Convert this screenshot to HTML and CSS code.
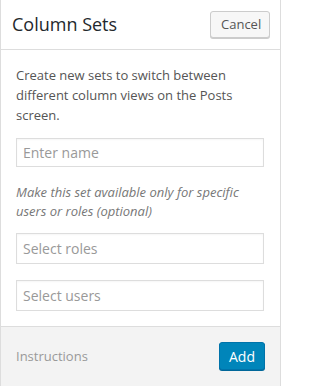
FILE: index.html
```html
<!DOCTYPE html>
<html>
<head>
<meta charset="utf-8">
<link rel="stylesheet" href="styles.css">
</head>
<body>
<div class="panel">
  <div class="header">
    <h2 class="title">Column Sets</h2>
    <button class="btn btn-secondary">Cancel</button>
  </div>
  <div class="content">
    <p class="intro">Create new sets to switch between different column views on the Posts screen.</p>
    <input class="field field-text" type="text" placeholder="Enter name">
    <p class="hint">Make this set available only for specific users or roles (optional)</p>
    <div class="field field-select">Select roles</div>
    <div class="field field-select">Select users</div>
  </div>
  <div class="footer">
    <span class="footer-link">Instructions</span>
    <button class="btn btn-primary">Add</button>
  </div>
</div>
</body>
</html>
```

FILE: styles.css
```css
html, body {
  margin: 0;
  padding: 0;
  background: #fff;
}
body {
  font-family: "Open Sans", "Liberation Sans", sans-serif;
  width: 282px;
  height: 386px;
  overflow: hidden;
}
.panel {
  width: 281px;
  height: 386px;
  box-sizing: border-box;
  border-left: 1px solid #dddddd;
  border-right: 1px solid #dddddd;
  display: flex;
  flex-direction: column;
  background: #fff;
}
.header {
  height: 50px;
  box-sizing: border-box;
  border-bottom: 1px solid #dddddd;
  display: flex;
  align-items: center;
  justify-content: space-between;
  padding: 0 10px 1px 11px;
}
.title {
  margin: 0;
  font-size: 18px;
  font-weight: 400;
  color: #23282d;
  line-height: 24px;
}
.btn {
  font-family: inherit;
  font-size: 13px;
  border-radius: 3px;
  padding: 0 10px;
  height: 27px;
  line-height: 25px;
  box-sizing: border-box;
  cursor: pointer;
}
.btn-secondary {
  width: 60px;
  color: #555;
  background: #f7f7f7;
  border: 1px solid #cccccc;
  box-shadow: 0 1px 0 #cccccc;
}
.content {
  padding: 15px 15px 15px 15px;
  display: flex;
  flex-direction: column;
}
.intro {
  margin: 0 0 13px;
  font-size: 13px;
  line-height: 20px;
  color: #555;
}
.field {
  box-sizing: border-box;
  width: 248px;
  border: 1px solid #dddddd;
  box-shadow: inset 0 1px 2px rgba(0,0,0,0.04);
  background: #fff;
  font-family: inherit;
  font-size: 14px;
  color: #999;
  padding: 0 6px;
  margin: 0;
  outline: none;
}
.field-text {
  height: 29px;
}
.field-text::placeholder {
  color: #999;
}
.field-select {
  height: 31px;
  line-height: 29px;
}
.hint {
  margin: 16px 0 12px;
  font-size: 13px;
  line-height: 19px;
  font-style: italic;
  color: #777;
}
.field-select + .field-select {
  margin-top: 16px;
}
.footer {
  flex: 1;
  background: #f3f3f3;
  border-top: 1px solid #dddddd;
  display: flex;
  align-items: flex-start;
  justify-content: space-between;
  padding: 15px 15px 0 15px;
}
.footer-link {
  font-size: 13px;
  color: #999;
  line-height: 28px;
}
.btn-primary {
  width: 46px;
  height: 28px;
  padding: 0;
  color: #fff;
  background: #0085ba;
  border: 1px solid #0073aa;
  box-shadow: 0 1px 0 #006799;
  font-size: 14px;
}
```
